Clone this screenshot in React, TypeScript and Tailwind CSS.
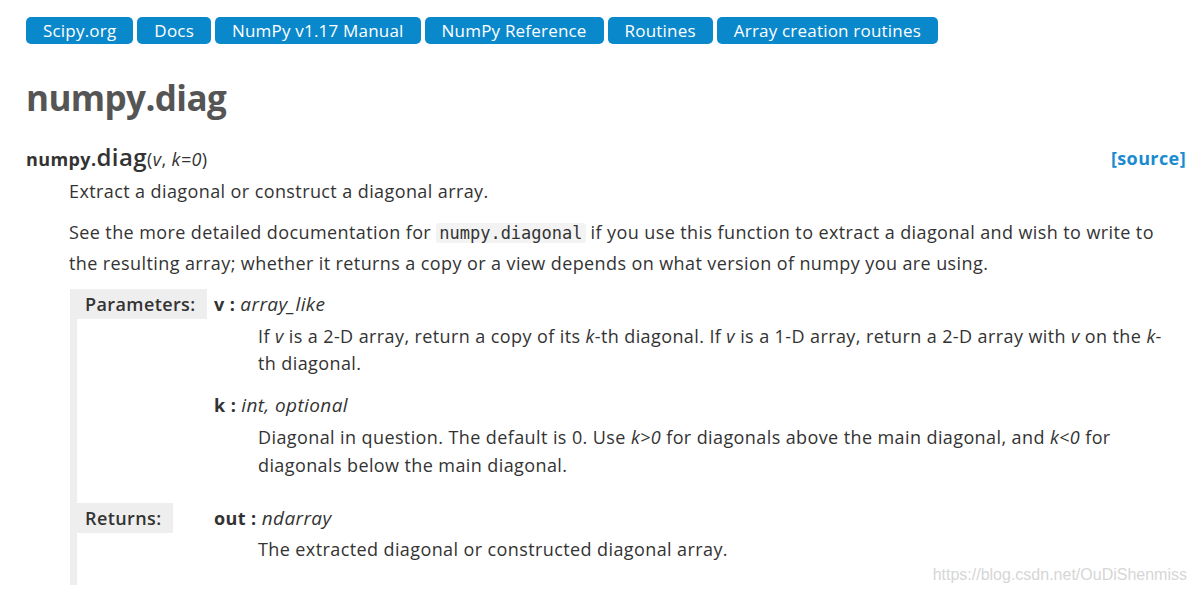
import React from "react";

const crumbs = [
  "Scipy.org",
  "Docs",
  "NumPy v1.17 Manual",
  "NumPy Reference",
  "Routines",
  "Array creation routines",
];

export default function App() {
  return (
    <div
      className="relative w-[1196px] h-[596px] overflow-hidden bg-white text-[#333] text-[18px] tracking-[0.4px] pl-[26px] pr-[10px]"
      style={{ fontFamily: '"Open Sans", "Noto Sans", sans-serif' }}
    >
      <nav className="pt-[17px] flex gap-[4px]">
        {crumbs.map((c) => (
          <span
            key={c}
            className="h-[27px] px-[17px] rounded-[5px] bg-[#0a88cc] text-white text-[17px] tracking-[0.2px] leading-[27px] whitespace-nowrap"
          >
            {c}
          </span>
        ))}
      </nav>

      <h1 className="mt-[32px] h-[44px] leading-[44px] text-[35px] font-bold text-[#555] tracking-[-0.6px]">
        numpy.diag
      </h1>

      <div className="mt-[23px] h-[30px] flex items-center justify-between">
        <div className="leading-[30px] whitespace-nowrap">
          <span className="text-[18px] font-bold text-[#333]">numpy.</span>
          <span className="text-[24px] font-semibold text-[#333]">diag</span>
          <span className="text-[18px] text-[#333]">(</span>
          <em className="text-[18px]">v</em>
          <span className="text-[18px]">, </span>
          <em className="text-[18px]">k=0</em>
          <span className="text-[18px]">)</span>
        </div>
        <a className="text-[18px] font-bold text-[#1a8bd0]">[source]</a>
      </div>

      <div className="ml-[43px]">
        <p className="mt-[3px] leading-[30px]">
          Extract a diagonal or construct a diagonal array.
        </p>
        <p className="mt-[11px] leading-[30px]">
          See the more detailed documentation for{" "}
          <code
            className="bg-[#f3f3f3] rounded-[3px] px-[3px] text-[17px] tracking-normal text-[#333]"
            style={{ fontFamily: '"DejaVu Sans Mono", "Liberation Mono", monospace' }}
          >
            numpy.diagonal
          </code>{" "}
          if you use this function to extract a diagonal and wish to write to the
          resulting array; whether it returns a copy or a view depends on what
          version of numpy you are using.
        </p>

        <div className="mt-[11px] ml-[1px] border-l-[7px] border-[#eeeeee] pb-[22px]">
          <div className="flex">
            <div className="w-[137px] shrink-0">
              <span className="inline-block h-[30px] leading-[30px] bg-[#eeeeee] pl-[8px] pr-[11px] font-semibold text-[#333]">
                Parameters:
              </span>
            </div>
            <div className="flex-1">
              <div className="leading-[30px]">
                <strong className="font-bold">v</strong>
                <span className="font-bold"> : </span>
                <em className="text-[19px] font-medium">array_like</em>
              </div>
              <p className="ml-[44px] mr-[22px] mt-[4px] leading-[27px]">
                If <em>v</em> is a 2-D array, return a copy of its <em>k</em>-th
                diagonal. If <em>v</em> is a 1-D array, return a 2-D array with{" "}
                <em>v</em> on the <em>k</em>-th diagonal.
              </p>
              <div className="mt-[13px] leading-[30px]">
                <strong className="font-bold">k</strong>
                <span className="font-bold"> : </span>
                <em className="text-[19px] font-medium">int, optional</em>
              </div>
              <p className="ml-[44px] mr-[22px] mt-[3px] leading-[28px]">
                Diagonal in question. The default is 0. Use <em>k&gt;0</em> for
                diagonals above the main diagonal, and <em>k&lt;0</em> for
                diagonals below the main diagonal.
              </p>
            </div>
          </div>

          <div className="flex mt-[24px]">
            <div className="w-[137px] shrink-0">
              <span className="inline-block h-[30px] leading-[30px] bg-[#eeeeee] pl-[8px] pr-[11px] font-semibold text-[#333]">
                Returns:
              </span>
            </div>
            <div className="flex-1">
              <div className="leading-[30px]">
                <strong className="font-bold">out</strong>
                <span className="font-bold"> : </span>
                <em className="text-[19px] font-medium">ndarray</em>
              </div>
              <p className="ml-[44px] mt-[3px] leading-[27px]">
                The extracted diagonal or constructed diagonal array.
              </p>
            </div>
          </div>
        </div>
      </div>

      <div
        className="absolute right-[9px] bottom-[9px] text-[16px] tracking-normal text-[#d6d6d6]"
        style={{ fontFamily: '"Liberation Sans", Arial, sans-serif' }}
      >
        https://blog.csdn.net/OuDiShenmiss
      </div>
    </div>
  );
}
